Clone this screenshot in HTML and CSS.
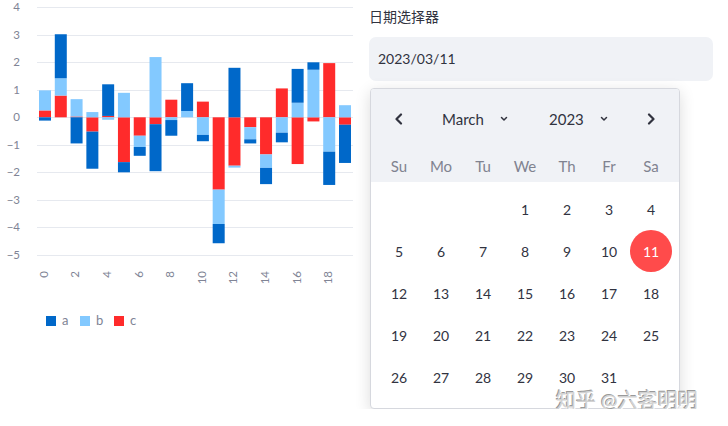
FILE: index.html
```html
<!DOCTYPE html>
<html lang="zh">
<head>
  <meta charset="UTF-8">
  <meta name="viewport" content="width=device-width, initial-scale=1.0">
  <title>日期选择器</title>
  <link rel="stylesheet" href="styles.css">
</head>
<body>
  <div class="page">
    <div class="chart-col">
      <svg id="chart" width="360" height="340"></svg>
    </div>

    <div class="picker-col">
      <label class="field-label">日期选择器</label>
      <div class="date-input">2023/03/11</div>

      <div class="calendar">
        <div class="cal-head">
          <div class="cal-nav">
            <span class="nav-btn">
              <svg width="10" height="12" viewBox="0 0 10 12"><path d="M7 1.5 L2.5 6 L7 10.5" fill="none" stroke="#31333f" stroke-width="2.2" stroke-linecap="round" stroke-linejoin="round"/></svg>
            </span>
            <span class="select">March
              <svg width="8" height="6" viewBox="0 0 8 6"><path d="M1.5 1.5 L4 4 L6.5 1.5" fill="none" stroke="#31333f" stroke-width="1.5" stroke-linecap="round" stroke-linejoin="round"/></svg>
            </span>
            <span class="select year">2023
              <svg width="8" height="6" viewBox="0 0 8 6"><path d="M1.5 1.5 L4 4 L6.5 1.5" fill="none" stroke="#31333f" stroke-width="1.5" stroke-linecap="round" stroke-linejoin="round"/></svg>
            </span>
            <span class="nav-btn">
              <svg width="10" height="12" viewBox="0 0 10 12"><path d="M3 1.5 L7.5 6 L3 10.5" fill="none" stroke="#31333f" stroke-width="2.2" stroke-linecap="round" stroke-linejoin="round"/></svg>
            </span>
          </div>
          <div class="weekdays">
            <span>Su</span><span>Mo</span><span>Tu</span><span>We</span><span>Th</span><span>Fr</span><span>Sa</span>
          </div>
        </div>
        <div class="days" id="days"></div>
      </div>

      <div class="watermark">知乎 @六客明明</div>
    </div>
  </div>

  <script>
    // stacked bar data: [a, b, c] per index
    const data = [
      [-0.12, 0.73, 0.25], [1.60, 0.63, 0.79], [-0.95, 0.63, 0.03], [-1.35, 0.19, -0.52],
      [1.15, -0.09, 0.05], [-0.37, 0.89, -1.63], [-0.32, -0.41, -0.67], [-1.71, 2.19, -0.25],
      [-0.57, -0.10, 0.64], [1.01, 0.23, 0.00], [-0.23, -0.64, 0.57], [-0.70, -1.25, -2.63],
      [1.80, -0.07, -1.76], [-0.15, -0.44, -0.36], [-0.59, -0.49, -1.35], [-0.35, -0.56, 1.05],
      [1.23, 0.53, -1.70], [0.27, 1.73, -0.15], [-1.21, -1.25, 1.97], [-1.39, 0.44, -0.27]
    ];
    const colors = ['#0068c9', '#83c9ff', '#ff2b2b'];
    const zero = 117.3, unit = 27.5, x0 = 45, step = 300 / 19, barW = 12;
    const ns = 'http://www.w3.org/2000/svg';
    const svg = document.getElementById('chart');

    function el(tag, attrs, text) {
      const node = document.createElementNS(ns, tag);
      for (const k in attrs) node.setAttribute(k, attrs[k]);
      if (text !== undefined) node.textContent = text;
      svg.appendChild(node);
      return node;
    }

    for (let v = 4; v >= -5; v--) {
      const y = Math.round(zero - v * unit) + 0.5;
      el('line', { x1: 37, x2: 353, y1: y, y2: y, class: 'grid' });
      el('text', { x: 20, y: y + 0.5, class: 'axis-label', 'text-anchor': 'end', 'dominant-baseline': 'middle' },
        v < 0 ? '\u2212' + (-v) : String(v));
    }

    data.forEach((row, i) => {
      const cx = x0 + i * step;
      let pos = 0, neg = 0;
      // stack order from zero outward: c, b, a
      [2, 1, 0].forEach(k => {
        const v = row[k];
        if (v === 0) return;
        let top, bottom;
        if (v > 0) { bottom = pos; pos += v; top = pos; }
        else { top = neg; neg += v; bottom = neg; }
        el('rect', {
          x: cx - barW / 2, width: barW,
          y: zero - top * unit, height: (top - bottom) * unit,
          fill: colors[k]
        });
      });
      if (i % 2 === 0) {
        el('text', { x: cx, y: 271, class: 'axis-label', 'text-anchor': 'end', 'dominant-baseline': 'middle',
          transform: 'rotate(-90 ' + cx + ' 271)' }, String(i));
      }
    });

    ['a', 'b', 'c'].forEach((name, k) => {
      const lx = 46 + k * 34;
      el('rect', { x: lx, y: 316, width: 10, height: 10, fill: colors[k] });
      el('text', { x: lx + 16, y: 321.5, class: 'legend-label', 'dominant-baseline': 'middle' }, name);
    });

    // calendar days, March 2023 starts on Wednesday
    const days = document.getElementById('days');
    for (let i = 0; i < 35; i++) {
      const d = i - 2;
      const cell = document.createElement('span');
      cell.className = 'day';
      if (d >= 1 && d <= 31) cell.textContent = d;
      if (d === 11) cell.classList.add('selected');
      days.appendChild(cell);
    }
  </script>
</body>
</html>
```

FILE: styles.css
```css
body {
  margin: 0;
  background-color: #ffffff;
  font-family: Lato, "Noto Sans", "Noto Sans CJK SC", sans-serif;
  color: #31333f;
}
.page {
  display: flex;
  gap: 9px;
}
.chart-col {
  width: 360px;
}
#chart {
  display: block;
}
.grid {
  stroke: #e6e9ef;
  stroke-width: 1;
}
.axis-label {
  font-family: Lato, "Noto Sans", sans-serif;
  font-size: 11.5px;
  fill: #808495;
}
.legend-label {
  font-family: Lato, "Noto Sans", sans-serif;
  font-size: 13px;
  fill: #808495;
}
.picker-col {
  position: relative;
  width: 344px;
  padding-top: 7px;
}
.field-label {
  display: block;
  height: 20px;
  line-height: 20px;
  font-size: 14px;
  margin-bottom: 10px;
}
.date-input {
  height: 44px;
  line-height: 44px;
  padding-left: 9px;
  background-color: #f0f2f6;
  border-radius: 7px;
  font-size: 14px;
}
.calendar {
  margin-top: 7px;
  margin-left: 1px;
  width: 308px;
  border: 1px solid #d6d8de;
  border-radius: 4px;
  background-color: #ffffff;
  box-shadow: 0 4px 16px rgba(0, 0, 0, 0.14);
  overflow: hidden;
}
.cal-head {
  background-color: #f0f2f6;
  padding: 8px 7px 0;
}
.cal-nav {
  display: flex;
  align-items: center;
  height: 44px;
}
.nav-btn {
  width: 42px;
  display: flex;
  justify-content: center;
  align-items: center;
}
.select {
  width: 105px;
  display: flex;
  align-items: center;
  gap: 16px;
  padding-left: 22px;
  box-sizing: border-box;
  font-size: 15px;
}
.select.year {
  padding-left: 24px;
}
.weekdays {
  display: grid;
  grid-template-columns: repeat(7, 42px);
  height: 33px;
  margin-top: 8px;
  align-items: center;
  font-size: 15px;
  color: #808390;
}
.weekdays span,
.day {
  text-align: center;
}
.days {
  display: grid;
  grid-template-columns: repeat(7, 42px);
  grid-auto-rows: 42px;
  padding: 6px 7px 10px;
}
.day {
  display: flex;
  justify-content: center;
  align-items: center;
  font-size: 14px;
}
.day.selected {
  background-color: #ff4b4b;
  color: #ffffff;
  border-radius: 50%;
}
.watermark {
  position: absolute;
  left: 187px;
  top: 385px;
  font-size: 20px;
  color: #d2d2d2;
  text-shadow: 1px 1px 0 #ffffff, -1px -1px 0 #9a9a9a;
  white-space: nowrap;
}
```
